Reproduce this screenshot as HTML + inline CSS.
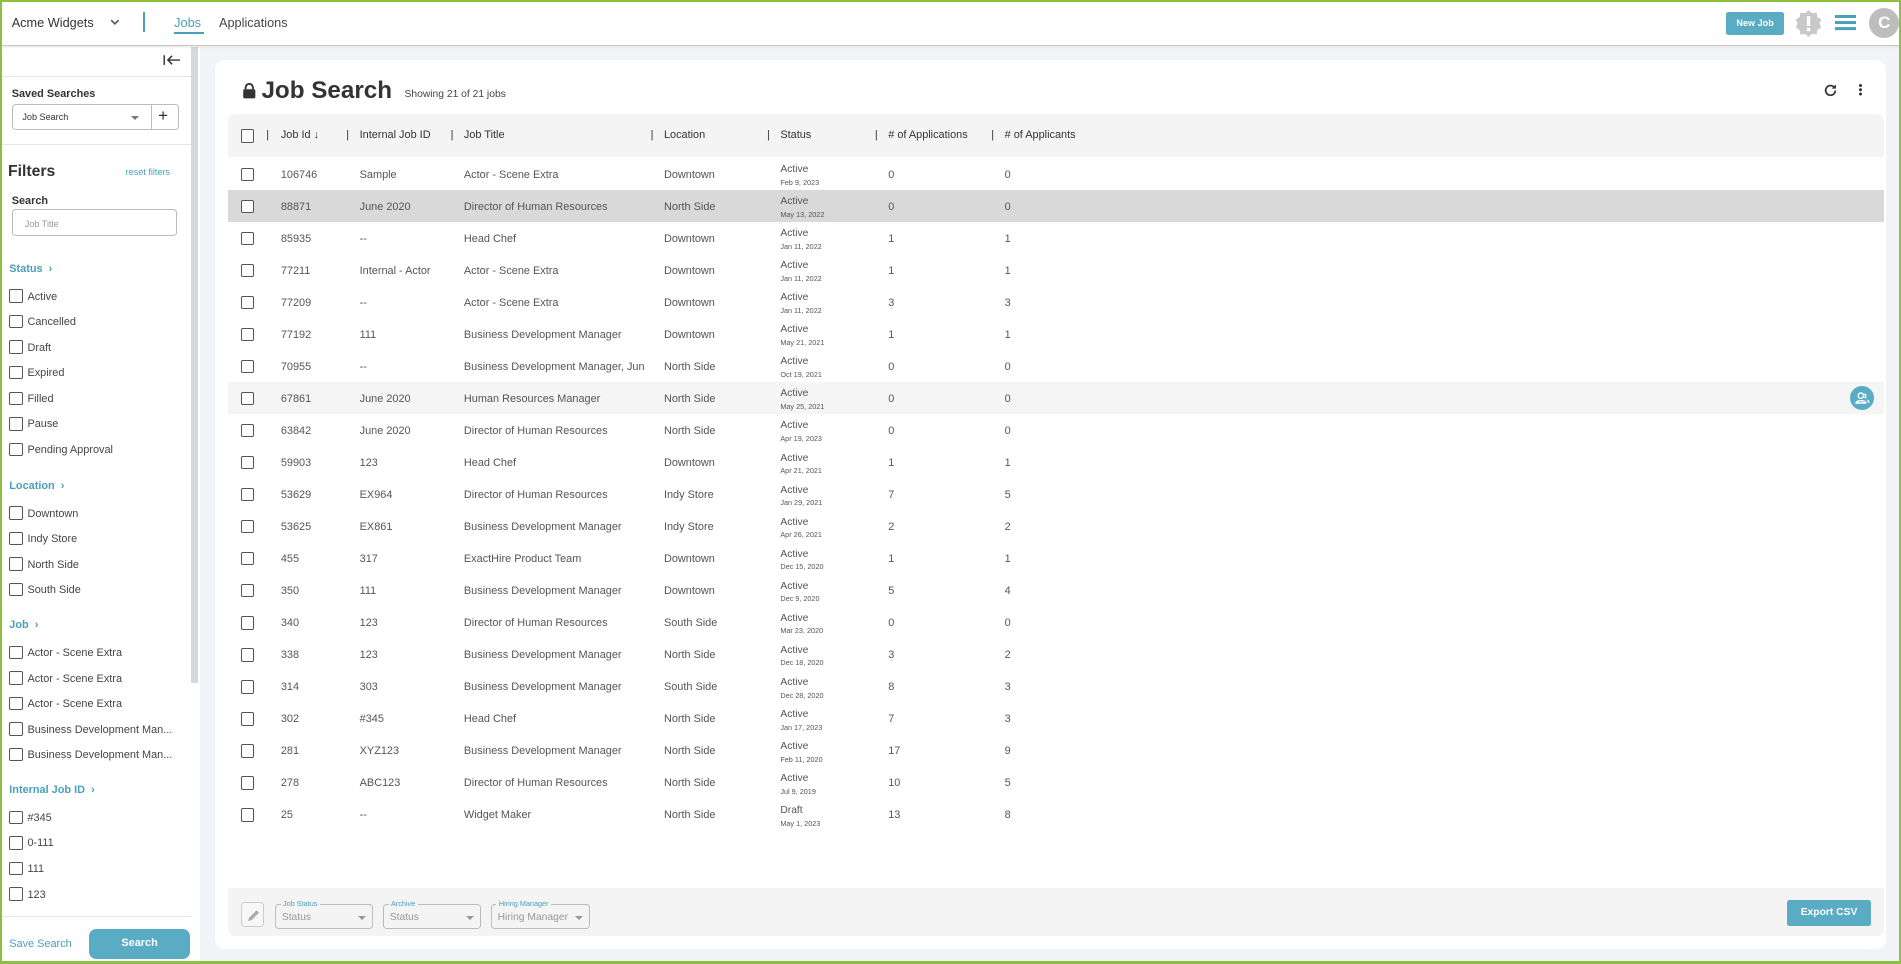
<!DOCTYPE html>
<html><head><meta charset="utf-8">
<style>
*{box-sizing:border-box;margin:0;padding:0}
html,body{width:1901px;height:964px;overflow:hidden;background:#fff}
#w{zoom:1.21237;width:1568px;height:795px;position:relative;font-family:"Liberation Sans",sans-serif;color:#333;overflow:hidden;border:2px solid #8cc13f;border-bottom-width:3px}
.a{position:absolute;white-space:nowrap}
.top{left:0;top:0;width:1566px;height:36px;background:#fff;border-bottom:1px solid #c8c8c8;box-shadow:0 1px 2px rgba(0,0,0,.15);z-index:3}
.side{left:0;top:37px;width:163px;height:758px;background:#fff}
.main{left:163px;top:37px;width:1410px;height:758px;background:#f1f4f7}
.card{left:176px;top:48px;width:1378px;height:733px;background:#fff;border-radius:8px}
.cb{width:11px;height:11px;border:1.3px solid #555;border-radius:1.5px;background:#fff}
.f{font-size:9px;color:#444}
.teal{color:#4a9fba}
.sec{font-size:9px;font-weight:bold;color:#4a9fba}
.row{position:absolute;left:186px;width:1366px;height:26.4px}
.row span{position:absolute;top:9px;font-size:9px;color:#555}
.row .cb{position:absolute;left:11px;top:8px}
.st{font-size:8.5px!important;top:5px!important}
.dt{font-size:6px!important;top:16.5px!important}
.hd span{position:absolute;font-size:9px;color:#333;top:13px}
.sel{position:absolute;top:744px;height:21px;border:1px solid #bbb;border-radius:3px;font-size:8.5px;color:#999;padding:6px 0 0 5px}
.sel i{position:absolute;right:5px;top:9px;border:3.5px solid transparent;border-top:4px solid #999}
.sel b{position:absolute;left:4px;top:-5px;font-size:6px;font-weight:normal;color:#4a9fba;background:#f4f4f4;padding:0 2px}
</style></head><body><div id="w">
<div class="a top">
 <div class="a" style="left:8px;top:11px;font-size:10.5px;color:#333">Acme Widgets</div>
 <svg class="a" style="left:89px;top:14px" width="8" height="6"><path d="M1 1l3 3 3-3" stroke="#555" stroke-width="1.3" fill="none"/></svg>
 <div class="a" style="left:116px;top:8px;width:2px;height:17px;background:#4a9fba"></div>
 <div class="a teal" style="left:142px;top:11px;font-size:10.5px">Jobs</div>
 <div class="a" style="left:142px;top:25px;width:25px;height:1.5px;background:#4a9fba"></div>
 <div class="a" style="left:179px;top:11px;font-size:10.5px;color:#444">Applications</div>
 <div class="a" style="left:1422px;top:8px;width:48px;height:19px;background:#5aabc4;border-radius:2px;color:#fff;font-size:7.5px;font-weight:bold;text-align:center;line-height:19px">New Job</div>
 <svg class="a" style="left:1478px;top:6px" width="24" height="24"><path d="M12 1l3 2.5 3.7-.5.6 3.7 3.2 2-1.5 3.3 1.5 3.3-3.2 2-.6 3.7-3.7-.5L12 23l-3-2.5-3.7.5-.6-3.7-3.2-2L3 12 1.5 8.7l3.2-2 .6-3.7 3.7.5z" fill="#c8c8c8"/><rect x="10.6" y="6" width="2.8" height="8" fill="#fff"/><rect x="10.6" y="15.5" width="2.8" height="2.8" fill="#fff"/></svg>
 <div class="a" style="left:1512px;top:11px;width:17px;height:2px;background:#4a9fba;box-shadow:0 5px 0 #4a9fba,0 10px 0 #4a9fba"></div>
 <div class="a" style="left:1540px;top:5px;width:25px;height:25px;border-radius:50%;background:#bdbdbd;color:#fff;font-weight:bold;font-size:14px;text-align:center;line-height:25px">C</div>
</div>
<div class="a side">
 <div class="a" style="left:156px;top:0;width:6px;height:525px;background:#d8d8d8"></div>
 <svg class="a" style="left:133px;top:6px" width="16" height="10"><path d="M1 1v8M14 5H4M7.5 1.5L4 5l3.5 3.5" stroke="#333" stroke-width="1.2" fill="none"/></svg>
 <div class="a" style="left:0;top:24px;width:156px;height:1px;background:#e6e6e6"></div>
 <div class="a" style="left:8px;top:34px;font-size:9px;font-weight:bold">Saved Searches</div>
 <div class="a" style="left:8px;top:47px;width:138px;height:22px;border:1px solid #bbb;border-radius:3px;background:#fff"><span class="a" style="left:8px;top:6px;font-size:7.5px">Job Search</span><i class="a" style="left:98px;top:9px;border:3.5px solid transparent;border-top:4px solid #777"></i><div class="a" style="left:114px;top:0;width:1px;height:20px;background:#bbb"></div><span class="a" style="left:120px;top:1px;font-size:14px;color:#333">+</span></div>
 <div class="a" style="left:0;top:80px;width:156px;height:1px;background:#e6e6e6"></div>
 <div class="a" style="left:5px;top:96px;font-size:13px;font-weight:bold">Filters</div>
 <div class="a teal" style="left:102px;top:99px;font-size:7.5px">reset filters</div>
 <div class="a" style="left:8px;top:122px;font-size:9px;font-weight:bold">Search</div>
 <div class="a" style="left:8px;top:134px;width:136px;height:22px;border:1px solid #bbb;border-radius:3px;font-size:7.5px;color:#999;padding:7px 0 0 10px">Job Title</div>
 <div id="flt"></div>
 <div class="a" style="left:0;top:717px;width:156px;height:1px;background:#e6e6e6"></div>
 <div class="a teal" style="left:6px;top:735px;font-size:9px">Save Search</div>
 <div class="a" style="left:72px;top:728px;width:83px;height:24px;border-radius:6px;background:#5aabc4;color:#fff;font-size:9px;font-weight:bold;text-align:center;line-height:24px">Search</div>
</div>
<div class="a main"></div>
<div class="a card"></div>
<svg class="a" style="left:198px;top:66px" width="12" height="14"><path d="M3 6V4.5a3 3 0 016 0V6" stroke="#333" stroke-width="1.6" fill="none"/><rect x="1" y="6" width="10" height="7.5" rx="1" fill="#333"/></svg>
<div class="a" style="left:214px;top:62px;font-size:20px;font-weight:bold;color:#333">Job Search</div>
<div class="a" style="left:332px;top:72px;font-size:8.5px;color:#444">Showing 21 of 21 jobs</div>
<svg class="a" style="left:1501px;top:66px" width="14" height="14"><path d="M11 7a4 4 0 11-1.2-2.9" stroke="#333" stroke-width="1.4" fill="none"/><path d="M11.5 2v3.5H8z" fill="#333"/></svg>
<div class="a" style="left:1532px;top:68px;width:2.5px;height:2.5px;border-radius:50%;background:#333;box-shadow:0 3.5px 0 #333,0 7px 0 #333"></div>
<div class="a hd" style="left:186px;top:92px;width:1366px;height:36px;background:#f4f4f4;border-radius:6px 6px 0 0">
 <div class="cb a" style="left:11px;top:13px"></div>
 <span style="left:32px">|</span><span style="left:44px">Job Id ↓</span>
 <span style="left:98px">|</span><span style="left:109px">Internal Job ID</span>
 <span style="left:184px">|</span><span style="left:195px">Job Title</span>
 <span style="left:349px">|</span><span style="left:360px">Location</span>
 <span style="left:445px">|</span><span style="left:456px">Status</span>
 <span style="left:534px">|</span><span style="left:545px"># of Applications</span>
 <span style="left:630px">|</span><span style="left:641px"># of Applicants</span>
</div>
<div id="rows"></div>
<div class="a" style="left:186px;top:731px;width:1366px;height:39px;background:#f4f4f4;border-radius:0 0 6px 6px"></div>
<div class="a" style="left:197px;top:742px;width:19px;height:21px;border:1px solid #ccc;border-radius:3px;background:#f7f7f7"><svg width="17" height="19"><path d="M5 15l1-3 6-6 2 2-6 6z" fill="#aaa"/></svg></div>
<div class="sel" style="left:225px;width:81px"><b>Job Status</b>Status<i></i></div>
<div class="sel" style="left:314px;width:81px"><b>Archive</b>Status<i></i></div>
<div class="sel" style="left:403px;width:82px"><b>Hiring Manager</b>Hiring Manager<i></i></div>
<div class="a" style="left:1472px;top:741px;width:70px;height:21px;background:#5aabc4;border-radius:2px;color:#fff;font-size:8.5px;font-weight:bold;text-align:center;line-height:21px">Export CSV</div>
</div>
<script>
var f=[["Status",["Active","Cancelled","Draft","Expired","Filled","Pause","Pending Approval"],220],["Location",["Downtown","Indy Store","North Side","South Side"],399],["Job",["Actor - Scene Extra","Actor - Scene Extra","Actor - Scene Extra","Business Development Man...","Business Development Man..."],514],["Internal Job ID",["#345","0-111","111","123","22"],650]];
var h="";f.forEach(function(s){var y=s[2]-37;h+='<div class="a sec" style="left:6px;top:'+(y-5)+'px">'+s[0]+' &nbsp;›</div>';s[1].forEach(function(t,i){var yy=y+23+i*21.1-5;if(yy>712)return;h+='<div class="a cb" style="left:6px;top:'+(yy-1)+'px"></div><div class="a f" style="left:21px;top:'+yy+'px">'+t+'</div>';});});
document.getElementById("flt").innerHTML=h;
var r=[["106746","Sample","Actor - Scene Extra","Downtown","Active","Feb 9, 2023","0","0"],["88871","June 2020","Director of Human Resources","North Side","Active","May 13, 2022","0","0"],["85935","--","Head Chef","Downtown","Active","Jan 11, 2022","1","1"],["77211","Internal - Actor","Actor - Scene Extra","Downtown","Active","Jan 11, 2022","1","1"],["77209","--","Actor - Scene Extra","Downtown","Active","Jan 11, 2022","3","3"],["77192","111","Business Development Manager","Downtown","Active","May 21, 2021","1","1"],["70955","--","Business Development Manager, Jun","North Side","Active","Oct 19, 2021","0","0"],["67861","June 2020","Human Resources Manager","North Side","Active","May 25, 2021","0","0"],["63842","June 2020","Director of Human Resources","North Side","Active","Apr 19, 2023","0","0"],["59903","123","Head Chef","Downtown","Active","Apr 21, 2021","1","1"],["53629","EX964","Director of Human Resources","Indy Store","Active","Jan 29, 2021","7","5"],["53625","EX861","Business Development Manager","Indy Store","Active","Apr 26, 2021","2","2"],["455","317","ExactHire Product Team","Downtown","Active","Dec 15, 2020","1","1"],["350","111","Business Development Manager","Downtown","Active","Dec 9, 2020","5","4"],["340","123","Director of Human Resources","South Side","Active","Mar 23, 2020","0","0"],["338","123","Business Development Manager","North Side","Active","Dec 18, 2020","3","2"],["314","303","Business Development Manager","South Side","Active","Dec 28, 2020","8","3"],["302","#345","Head Chef","North Side","Active","Jan 17, 2023","7","3"],["281","XYZ123","Business Development Manager","North Side","Active","Feb 11, 2020","17","9"],["278","ABC123","Director of Human Resources","North Side","Active","Jul 9, 2019","10","5"],["25","--","Widget Maker","North Side","Draft","May 1, 2023","13","8"]];
var x=[44,109,195,360,456,456,545,641];h="";
r.forEach(function(d,i){var bg=i==1?"#d9d9d9":(i==7?"#f5f5f5":"transparent");h+='<div class="row" style="top:'+(129+i*26.4)+'px;background:'+bg+'"><div class="cb"></div>';d.forEach(function(t,j){var tt=(j==2&&t.length>32)?'<span style="position:static;display:inline-block;width:158px;overflow:hidden">'+t+'</span>':t;h+='<span class="'+(j==4?'st':j==5?'dt':'')+'" style="left:'+x[j]+'px">'+tt+'</span>';});if(i==7)h+='<div style="position:absolute;left:1338px;top:3px;width:20px;height:20px;border-radius:50%;background:#5aabc4"><svg width="20" height="20"><circle cx="9" cy="8" r="2.2" fill="none" stroke="#fff" stroke-width="1.2"/><path d="M5 14c0-2.5 8-2.5 8 0z" fill="none" stroke="#fff" stroke-width="1.2"/><path d="M12 6.5a2 2 0 010 3.5M14 11.5c1 .5 1.5 1.5 1.5 2.5" fill="none" stroke="#fff" stroke-width="1.1"/></svg></div>';h+='</div>';});
document.getElementById("rows").innerHTML=h;
</script>
</body></html>
